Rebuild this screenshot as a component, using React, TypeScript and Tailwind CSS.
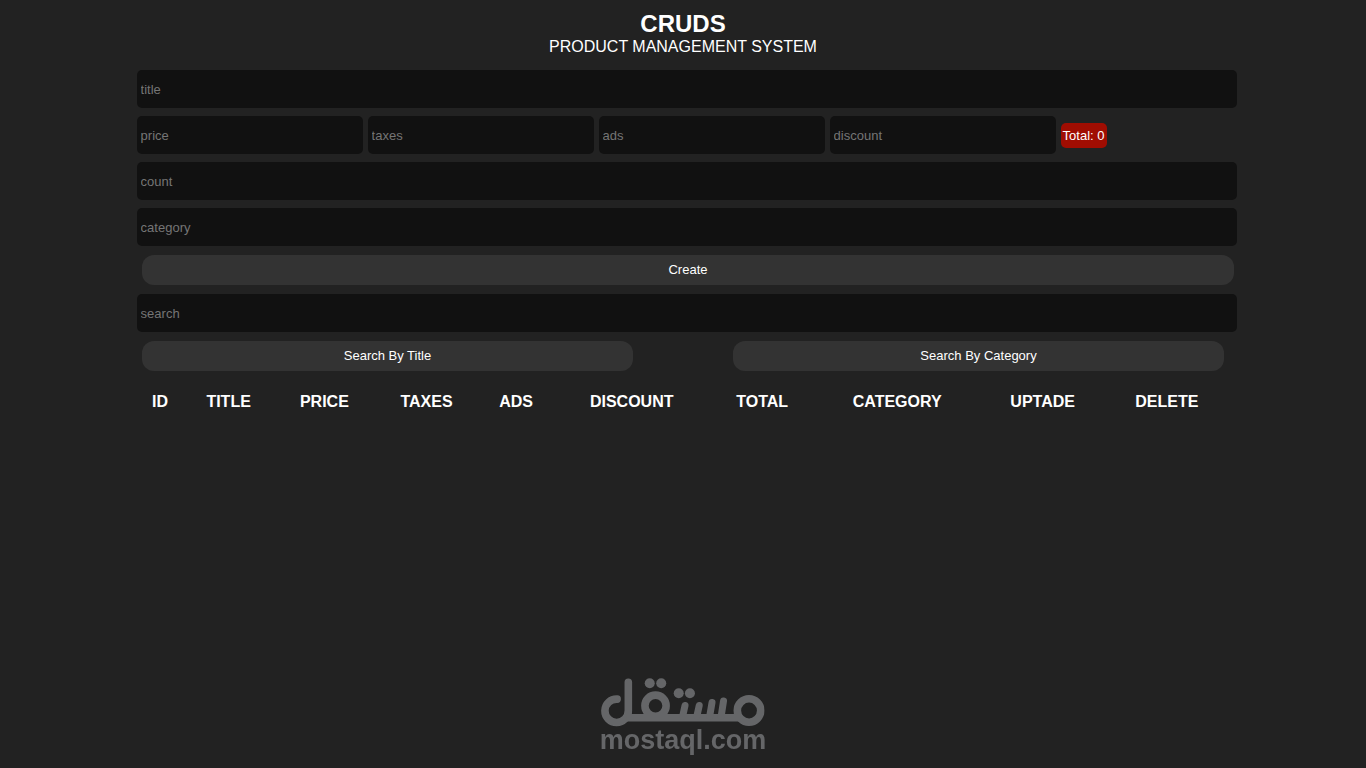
import { useState } from 'react';

const columns = ['ID', 'TITLE', 'PRICE', 'TAXES', 'ADS', 'DISCOUNT', 'TOTAL', 'CATEGORY', 'UPTADE', 'DELETE'];

const priceFields = ['price', 'taxes', 'ads', 'discount'] as const;

type PriceField = (typeof priceFields)[number];

const inputClass =
  'box-content h-[30px] my-1 p-1 rounded-[5px] bg-[#111111] text-[13px] text-white placeholder:text-[#757575] outline-none focus:bg-black';

const buttonClass = 'm-[5px] h-[30px] rounded-[12px] bg-[#333333] text-[13px] text-white hover:bg-black';

const Watermark = () => (
  <div className="pointer-events-none fixed bottom-4 left-1/2 -translate-x-1/2 text-[#656668]">
    <svg className="mx-auto block h-[50px] w-[164px]" viewBox="0 0 164 50" fill="none" stroke="currentColor" aria-hidden="true">
      <g strokeWidth="7.6" strokeLinecap="round" strokeLinejoin="round">
        <path d="M16.400 21.100A11.700 11.700 0 1 0 27.600 32.500V4.200" />
        <circle cx="54.800" cy="27.700" r="10.600" />
        <circle cx="148.300" cy="32.500" r="11.700" />
        <path d="M26 39.800H140" strokeLinecap="butt" />
        <path d="M82 38l2.300-10.500M96.200 38l2.300-10.500M109 38l2.300-13.500M120.500 38l2.300-15" strokeWidth="7" />
      </g>
      <g fill="currentColor" stroke="none">
        <circle cx="49" cy="5.200" r="5" />
        <circle cx="60.500" cy="5.200" r="5" />
        <circle cx="78" cy="15.300" r="5" />
        <circle cx="89.200" cy="15.300" r="5" />
      </g>
    </svg>
    <p className="text-center text-[27px] leading-6 font-bold">mostaql.com</p>
  </div>
);

const App = () => {
  const [prices, setPrices] = useState<Record<PriceField, string>>({ price: '', taxes: '', ads: '', discount: '' });

  const total = +prices.price + +prices.taxes + +prices.ads - +prices.discount;

  return (
    <div className="min-h-screen bg-[#222222] font-['Liberation_Sans',Arial,sans-serif] text-base leading-[18px] text-white">
      <main className="mx-auto w-4/5 pt-2.5">
        <header className="mb-2.5 text-center uppercase">
          <h1 className="text-2xl leading-7 font-bold">cruds</h1>
          <p>product management system</p>
        </header>

        <form className="flex flex-col items-start" onSubmit={(e) => e.preventDefault()}>
          <input className={`w-full ${inputClass}`} type="text" placeholder="title" aria-label="title" />
          <div className="w-full">
            {priceFields.map((field) => (
              <span key={field}>
                <input
                  className={`w-1/5 align-middle ${inputClass}`}
                  type="text"
                  inputMode="decimal"
                  placeholder={field}
                  aria-label={field}
                  value={prices[field]}
                  onChange={(e) => setPrices({ ...prices, [field]: e.target.value })}
                />{' '}
              </span>
            ))}
            <small className="inline-block rounded-[5px] bg-[#a00d02] px-0.5 py-1 align-middle text-[13px] leading-[17px]">
              Total: {total || 0}
            </small>
          </div>
          <input className={`w-full ${inputClass}`} type="text" placeholder="count" aria-label="count" />
          <input className={`w-full ${inputClass}`} type="text" placeholder="category" aria-label="category" />
          <button className={`w-full ${buttonClass}`} type="submit">
            Create
          </button>
        </form>

        <section className="flex flex-col items-start">
          <input className={`w-full ${inputClass}`} type="text" placeholder="search" aria-label="search" />
          <div className="flex w-full justify-between">
            <button className={`w-[45%] ${buttonClass}`} type="button">
              Search By Title
            </button>
            <button className={`w-[45%] ${buttonClass}`} type="button">
              Search By Category
            </button>
          </div>
        </section>

        <table className="my-2.5 w-full border-separate border-spacing-0.5 text-center">
          <thead>
            <tr>
              {columns.map((column) => (
                <th key={column} className="p-[5px] font-bold">
                  {column}
                </th>
              ))}
            </tr>
          </thead>
          <tbody />
        </table>
      </main>

      <Watermark />
    </div>
  );
};

export default App;
